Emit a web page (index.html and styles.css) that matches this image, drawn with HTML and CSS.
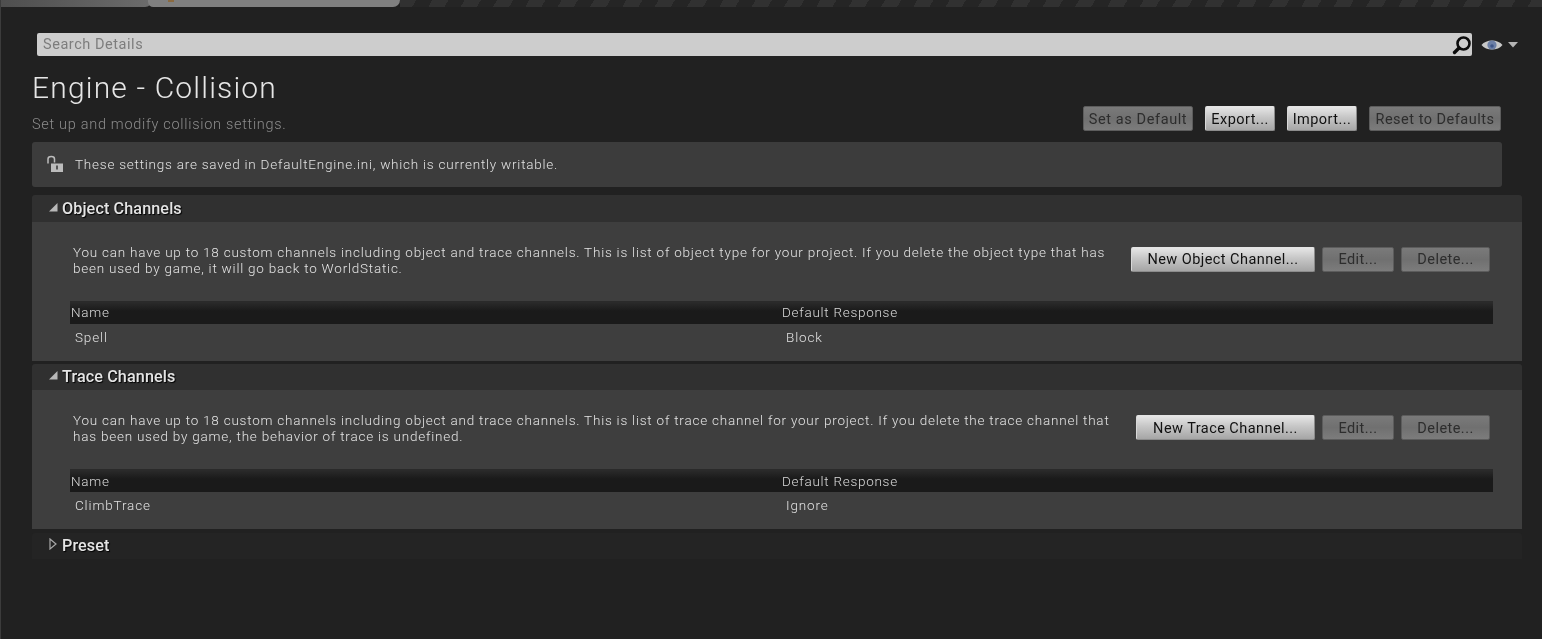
FILE: index.html
```html
<!DOCTYPE html>
<html lang="en">
<head>
<meta charset="utf-8">
<title>Engine - Collision</title>
<link rel="stylesheet" href="styles.css">
</head>
<body>
<div class="tabstrip">
  <div class="tab tab-a"></div>
  <div class="tab tab-b"><span class="tab-dot"></span><span class="tab-label">Project Settings</span></div>
  <div class="hatch"></div>
</div>
<div class="page">
  <div class="search-row">
    <div class="search">
      <span class="search-text">Search Details</span>
      <svg class="search-icon" width="20" height="20" viewBox="0 0 20 20"><circle cx="11.5" cy="8.5" r="6" fill="none" stroke="#0c0c0c" stroke-width="2.6"/><path d="M7 13 L2.5 17.5" stroke="#0c0c0c" stroke-width="3.4" stroke-linecap="round"/></svg>
    </div>
    <svg class="eye" width="22" height="14" viewBox="0 0 22 14"><path d="M0.5 7 C5 1 17 1 21.5 7 C17 13 5 13 0.5 7 Z" fill="#c8c8c8"/><circle cx="11" cy="7" r="4.6" fill="#6c7fa6"/><circle cx="11" cy="8" r="1.8" fill="#3f5688"/></svg>
    <svg class="caret" width="12" height="7" viewBox="0 0 12 7"><path d="M1 1 H11 L6 6.5 Z" fill="#b4b4b4"/></svg>
  </div>

  <div class="head-row">
    <div class="head-text">
      <h1 class="title">Engine - Collision</h1>
      <p class="subtitle">Set up and modify collision settings.</p>
    </div>
    <div class="head-actions">
      <button class="btn btn-off btn-default">Set as Default</button>
      <button class="btn btn-on btn-file">Export...</button>
      <button class="btn btn-on btn-file">Import...</button>
      <button class="btn btn-off btn-reset">Reset to Defaults</button>
    </div>
  </div>

  <div class="notice">
    <svg class="lock" width="20" height="18" viewBox="0 0 20 18"><path d="M2 8.5 V4 C2 0.6 8.5 0.6 8.5 4 V7.5" fill="none" stroke="#bcbcbc" stroke-width="1.5"/><rect x="5" y="8.5" width="12" height="8.5" fill="#bcbcbc"/><rect x="10" y="10.5" width="2" height="4" fill="#555"/></svg>
    <span>These settings are saved in DefaultEngine.ini, which is currently writable.</span>
  </div>

  <section class="section">
    <div class="sec-head">
      <svg class="arrow" width="10" height="10" viewBox="0 0 10 10"><path d="M9.5 1 V9.5 H1 Z" fill="#b8b8b8"/></svg>
      <span class="sec-title">Object Channels</span>
    </div>
    <div class="sec-body">
      <div class="intro">
        <p class="intro-text">You can have up to 18 custom channels including object and trace channels. This is list of object type for your project. If you delete the object type that has been used by game, it will go back to WorldStatic.</p>
        <div class="intro-actions">
          <button class="btn btn-on btn-new-object">New Object Channel...</button>
          <button class="btn btn-off btn-edit">Edit...</button>
          <button class="btn btn-off btn-delete">Delete...</button>
        </div>
      </div>
      <div class="table">
        <div class="thead"><span class="col-a">Name</span><span class="col-b">Default Response</span></div>
        <div class="trow"><span class="col-a">Spell</span><span class="col-b">Block</span></div>
      </div>
    </div>
  </section>

  <section class="section">
    <div class="sec-head">
      <svg class="arrow" width="10" height="10" viewBox="0 0 10 10"><path d="M9.5 1 V9.5 H1 Z" fill="#b8b8b8"/></svg>
      <span class="sec-title">Trace Channels</span>
    </div>
    <div class="sec-body">
      <div class="intro">
        <p class="intro-text">You can have up to 18 custom channels including object and trace channels. This is list of trace channel for your project. If you delete the trace channel that has been used by game, the behavior of trace is undefined.</p>
        <div class="intro-actions">
          <button class="btn btn-on btn-new-trace">New Trace Channel...</button>
          <button class="btn btn-off btn-edit">Edit...</button>
          <button class="btn btn-off btn-delete">Delete...</button>
        </div>
      </div>
      <div class="table">
        <div class="thead"><span class="col-a">Name</span><span class="col-b">Default Response</span></div>
        <div class="trow"><span class="col-a">ClimbTrace</span><span class="col-b">Ignore</span></div>
      </div>
    </div>
  </section>

  <section class="section section-closed">
    <div class="sec-head sec-head-closed">
      <svg class="arrow" width="10" height="12" viewBox="0 0 10 12"><path d="M2 1 L8 6 L2 11 Z" fill="none" stroke="#a8a8a8" stroke-width="1.2"/></svg>
      <span class="sec-title">Preset</span>
    </div>
  </section>
</div>
</body>
</html>
```

FILE: styles.css
```css
* { box-sizing: border-box; }
html, body { margin: 0; padding: 0; height: 100%; overflow: hidden; }
body {
  background: #212121;
  color: #cfcfcf;
  font-family: Roboto, "Liberation Sans", sans-serif;
  border-left: 1px solid #3c3c3c;
}
.tabstrip { display: flex; height: 7px; background: #212121; margin-left: -1px; }
.tab { height: 7px; }
.tab-a { width: 152px; background: linear-gradient(90deg, #4e4e4e, #6c6c6c); border-bottom-right-radius: 8px; }
.tab-b {
  width: 252px; margin-left: -4px; background: #808080; overflow: hidden;
  border-bottom-left-radius: 6px; border-bottom-right-radius: 8px;
  display: flex; align-items: flex-start; padding-left: 20px;
}
.tab-dot { width: 6px; height: 2px; background: #8a6a40; flex: none; }
.tab-label { margin: -17px 0 0 21px; font-size: 14px; line-height: 18px; letter-spacing: .3px; color: #151515; white-space: nowrap; }
.hatch {
  flex: 1;
  background: repeating-linear-gradient(120deg, #313131 0 14px, #252525 14px 28px);
}
.page { padding: 26px 20px 0 31px; will-change: transform; }

.search-row { display: flex; align-items: center; height: 23px; padding-left: 5px; }
.search {
  width: 1435px; height: 23px; background: #cdcdcd; border-radius: 2px;
  display: flex; align-items: center; justify-content: space-between; padding: 0 0 0 6px;
}
.search-text { color: #7d7d7d; font-size: 14.5px; letter-spacing: .55px; }
.search-icon { margin-right: 0; }
.eye { margin-left: 9px; }
.caret { margin-left: 4px; }

.head-row { display: flex; justify-content: space-between; width: 1470px; margin-top: 14px; height: 72px; }
.title { margin: 0; font-weight: 300; font-size: 30px; line-height: 36px; letter-spacing: 1.17px; color: #e6e6e6; }
.subtitle { margin: 10px 0 0; font-size: 14.5px; line-height: 17px; letter-spacing: .7px; color: #8c8c8c; font-weight: 300; }
.head-actions { display: flex; gap: 12px; padding-top: 36px; margin-right: 1px; height: 61px; }

.btn {
  font-family: inherit; height: 25px; padding: 1px 0 0; border-radius: 2px;
  font-size: 14.5px; letter-spacing: .45px; white-space: nowrap;
}
.btn-on {
  color: #111;
  border: 1px solid #8c8c8c;
  border-top-color: #e4e4e4; border-left-color: #d8d8d8;
  background: linear-gradient(#e6e6e6, #c6c6c6 45%, #a6a6a6);
}
.btn-off {
  color: #2d2d2d;
  border: 1px solid #5c5c5c;
  background: linear-gradient(#7a7a7a, #707070 50%, #7c7c7c);
}
.btn-default { width: 110px; letter-spacing: .6px; }
.btn-file { width: 70px; letter-spacing: .45px; }
.btn-reset { width: 132px; letter-spacing: .5px; }

.notice {
  display: flex; align-items: center; width: 1470px; height: 45px;
  background: #3c3c3c; border-radius: 3px; padding-left: 14px;
  font-size: 13.5px; letter-spacing: .77px; color: #e2e2e2; font-weight: 300;
}
.notice span { margin-top: -2px; }
.lock { margin-right: 9px; margin-top: -2px; }
.notice + .section { margin-top: 8px; }

.section { width: 1490px; margin-top: 3px; }
.section-closed { margin-top: 3.5px; }
.sec-head {
  display: flex; align-items: center; height: 26.5px; padding-left: 16px;
  background: #303030; border-radius: 3px 3px 0 0;
}
.sec-head-closed { background: #242424; }
.arrow { margin-top: -3px; flex: none; }
.sec-title {
  margin-left: 4px; font-weight: 500; font-size: 16.2px; letter-spacing: .1px;
  color: #e4e4e4; text-shadow: 1px 1px 1px #000;
}
.sec-body { background: #3e3e3e; height: 139px; padding: 22px 29px 0 38px; }
.intro { display: flex; justify-content: space-between; height: 57px; padding-left: 3px; }
.intro-text {
  margin: 0; width: 1042px; font-size: 13.5px; line-height: 16px; letter-spacing: .776px;
  color: #e4e4e4; font-weight: 300; flex: none;
}
.intro-actions { display: flex; gap: 7px; margin-top: 3.25px; margin-right: 3px; }
.btn-new-object { width: 184px; }
.btn-new-trace { width: 179px; }
.btn-edit { width: 72px; }
.btn-delete { width: 89px; }

.thead {
  display: flex; align-items: center; height: 23px; padding-bottom: 1px;
  background: linear-gradient(#2b2b2b, #1a1a1a 40%, #1a1a1a);
  border-top: 1px solid #2a2a2a;
  font-size: 13.5px; letter-spacing: .72px; color: #dadada; font-weight: 300;
}
.thead .col-a { width: 711px; padding-left: 1px; }
.thead .col-b { padding-left: 1px; }
.trow {
  display: flex; align-items: center; height: 26px;
  font-size: 13.5px; letter-spacing: .85px; color: #e0e0e0; font-weight: 300;
}
.trow .col-a { width: 711px; padding-left: 5px; }
.trow .col-b { padding-left: 5px; }
```
